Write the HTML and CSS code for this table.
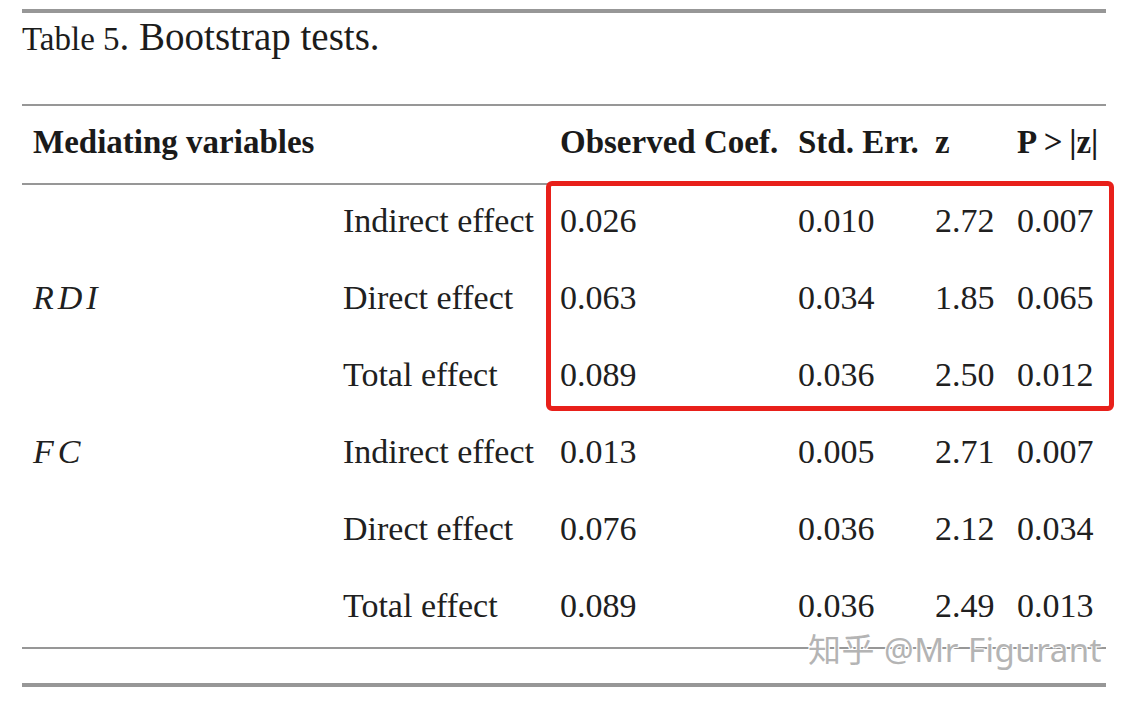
FILE: index.html
```html
<!DOCTYPE html>
<html lang="en">
<head>
<meta charset="utf-8">
<title>Table 5. Bootstrap tests.</title>
<link rel="stylesheet" href="styles.css">
</head>
<body>
<div class="figure">
  <div class="caption"><span class="label">Table 5</span>. Bootstrap tests.</div>
  <div class="table">
    <div class="row head">
      <div class="cell">Mediating variables</div>
      <div class="cell"></div>
      <div class="cell">Observed Coef.</div>
      <div class="cell">Std. Err.</div>
      <div class="cell">z</div>
      <div class="cell">P&thinsp;&gt;&thinsp;|z|</div>
    </div>
    <div class="body">
      <div class="row">
        <div class="cell"></div>
        <div class="cell">Indirect effect</div>
        <div class="cell">0.026</div>
        <div class="cell">0.010</div>
        <div class="cell">2.72</div>
        <div class="cell">0.007</div>
      </div>
      <div class="row">
        <div class="cell var">RDI</div>
        <div class="cell">Direct effect</div>
        <div class="cell">0.063</div>
        <div class="cell">0.034</div>
        <div class="cell">1.85</div>
        <div class="cell">0.065</div>
      </div>
      <div class="row">
        <div class="cell"></div>
        <div class="cell">Total effect</div>
        <div class="cell">0.089</div>
        <div class="cell">0.036</div>
        <div class="cell">2.50</div>
        <div class="cell">0.012</div>
      </div>
      <div class="row">
        <div class="cell var">FC</div>
        <div class="cell">Indirect effect</div>
        <div class="cell">0.013</div>
        <div class="cell">0.005</div>
        <div class="cell">2.71</div>
        <div class="cell">0.007</div>
      </div>
      <div class="row">
        <div class="cell"></div>
        <div class="cell">Direct effect</div>
        <div class="cell">0.076</div>
        <div class="cell">0.036</div>
        <div class="cell">2.12</div>
        <div class="cell">0.034</div>
      </div>
      <div class="row">
        <div class="cell"></div>
        <div class="cell">Total effect</div>
        <div class="cell">0.089</div>
        <div class="cell">0.036</div>
        <div class="cell">2.49</div>
        <div class="cell">0.013</div>
      </div>
    </div>
    <div class="highlight"></div>
  </div>
  <div class="foot"></div>
  <div class="watermark">知乎 @Mr Figurant</div>
</div>
</body>
</html>
```

FILE: styles.css
```css
html, body {
  margin: 0;
  padding: 0;
  background: #ffffff;
}

body {
  font-family: "Liberation Serif", "Times New Roman", serif;
  color: #202020;
}

.figure {
  position: relative;
  margin: 9px 0 0 22px;
  width: 1084px;
}

.caption {
  border-top: 4px solid #979797;
  height: 88px;
  padding-top: 3px;
  font-size: 39px;
  line-height: 42px;
  color: #1c1c1c;
}

.caption .label {
  font-size: 33px;
}

.table {
  position: relative;
  border-top: 2px solid #979797;
  border-bottom: 2px solid #979797;
}

.row {
  display: grid;
  grid-template-columns: 310px 217px 238px 137px 82px 1fr;
  padding-left: 11px;
  height: 77px;
  font-size: 34px;
  line-height: 71px;
  white-space: nowrap;
}

.row.head {
  font-weight: bold;
  font-size: 33px;
  line-height: 73px;
  border-bottom: 2px solid #979797;
  color: #1a1a1a;
}

.var {
  font-style: italic;
  letter-spacing: 4px;
}

.highlight {
  position: absolute;
  left: 524px;
  top: 75px;
  width: 568px;
  height: 230px;
  box-sizing: border-box;
  border: 5px solid #e8201a;
  border-radius: 6px;
}

.foot {
  height: 34px;
  border-bottom: 4px solid #979797;
}

.watermark {
  position: absolute;
  left: 786px;
  top: 620px;
  font-family: "Noto Sans", "Noto Sans CJK SC", sans-serif;
  font-size: 33px;
  line-height: 42px;
  letter-spacing: 0.5px;
  color: #b4b4b4;
  white-space: nowrap;
  text-shadow: 1px 1px 0 #fff, -1px -1px 0 #fff, 1px -1px 0 #fff, -1px 1px 0 #fff;
}
```
